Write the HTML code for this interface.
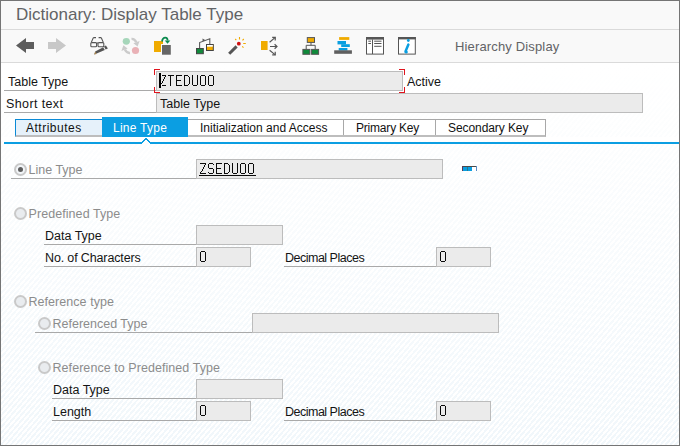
<!DOCTYPE html>
<html><head><meta charset="utf-8">
<style>
*{margin:0;padding:0;box-sizing:border-box}
html,body{width:680px;height:446px;overflow:hidden;background:#fff}
body{position:relative;font-family:"Liberation Sans",sans-serif;font-size:12.5px;color:#000}
.a{position:absolute;white-space:pre;line-height:normal}
#frame{position:absolute;left:0;top:0;width:680px;height:446px;border:1px solid #757575;z-index:50}
#head{position:absolute;left:0;top:0;width:680px;height:63px;background:#f9f9f9}
.hl{position:absolute;left:1px;width:678px;height:1px;background:#dadada}
#content{position:absolute;left:0;top:63px;width:680px;height:383px;
 background:linear-gradient(to bottom,rgba(255,255,255,1) 0%,rgba(255,255,255,0) 100%),repeating-linear-gradient(130.2deg,#ffffff 0px,#ffffff 1.88px,#f1f7fb 1.88px,#f1f7fb 3.76px)}
.title{left:16px;top:5px;font-size:17px;color:#626366}
.lbl{font-size:12.5px;color:#141414}
.ul{position:absolute;height:1px;background:#a9a9a9}
.fld{position:absolute;background:#ebebeb;border:1px solid #bcbcbc;height:20px}
.mono{font-family:"Liberation Mono",monospace;font-size:14px;color:#111;transform:scaleX(0.93);transform-origin:0 0}
.dis{color:#8c8c8c}
.radio{position:absolute;width:13px;height:13px;border-radius:50%;border:2px solid #c9c9c9;background:#e9ecef}
.radio.on{background:#f3f6f9}
.radio.on::after{content:"";position:absolute;left:2px;top:2px;width:5px;height:5px;border-radius:50%;background:#5e5e5e}
.tab{position:absolute;top:119px;height:18px;border-top:1px solid #a8a8a8;border-bottom:2px solid #bdbdbd;font-size:12px;color:#111}
.tab span{position:absolute;top:1px;font-size:12px}
.br{position:absolute;background:#e0141e}
</style></head><body>
<div id="head"></div>
<div class="hl" style="top:29px"></div>
<div class="hl" style="top:62px"></div>
<div id="content"></div>

<div class="a title">Dictionary: Display Table Type</div>

<!-- toolbar icons -->
<svg class="a" style="left:0;top:30px" width="680" height="32" viewBox="0 30 680 32">
 <!-- back -->
 <path d="M16 45.5 L26 38 L26 42 L34 42 L34 49 L26 49 L26 53 Z" fill="#5d5d5d"/>
 <!-- forward -->
 <path d="M66 45.5 L56 38 L56 42 L48 42 L48 49 L56 49 L56 53 Z" fill="#c8c8c8"/>
 <!-- glasses + pencil -->
 <g fill="none" stroke="#555" stroke-width="1.1">
  <rect x="90.8" y="42.6" width="5.8" height="4.2" rx="1"/>
  <rect x="98" y="42.6" width="5.8" height="4.2" rx="1"/>
  <path d="M96.6 43 L98 43 M91.3 42.4 L93.2 38 Q93.5 37.6 94 37.6 L96 37.6 M103.3 42.4 L101.4 38 Q101.1 37.6 100.6 37.6 L98.6 37.6"/>
 </g>
 <path d="M94.3 54.6 L95.2 51.6 L103.2 47.3 L104.8 50 Z" fill="#555"/>
 <path d="M104 46.6 L105.9 45.5 L107.9 48.4 L105.6 49.6 Z" fill="#555"/>
 <path d="M94.3 54.6 L95.2 51.6 L96.6 53.9 Z" fill="#b08a50"/>
 <!-- circles sync -->
 <ellipse cx="126.3" cy="41.3" rx="3.6" ry="3.4" fill="#a6d6ba"/>
 <ellipse cx="135.5" cy="50.4" rx="3.6" ry="3.5" fill="#e9b1b6"/>
 <path d="M131.5 38.9 Q134.5 38.6 136.3 42.3" fill="none" stroke="#cbcbcb" stroke-width="2.4"/>
 <path d="M133.4 43.3 L139.6 41 L137.6 46.6 Z" fill="#cbcbcb"/>
 <path d="M130 53 Q126.7 53.3 124.9 49.6" fill="none" stroke="#cbcbcb" stroke-width="2.4"/>
 <path d="M127.6 48.6 L121.4 50.9 L123.4 45.3 Z" fill="#cbcbcb"/>
 <!-- copy/transfer -->
 <rect x="154" y="41" width="9" height="11" fill="#f0ab00"/>
 <rect x="161" y="44" width="10.6" height="11.5" fill="#f9f9f9"/>
 <rect x="162" y="45" width="8.8" height="9.7" fill="#666"/>
 <path d="M162 41.5 Q162.6 37.7 165.3 37.7 Q167.6 37.7 167.6 40.6" fill="none" stroke="#0b8a4e" stroke-width="1.8"/>
 <path d="M164.8 40.4 L170.3 40.4 L167.5 43.8 Z" fill="#0b8a4e"/>
 <!-- hierarchy move -->
 <path d="M199.6 48 L199.6 42.6 L209.8 38.8 L209.8 44.2" fill="none" stroke="#5a5a5a" stroke-width="1.1"/>
 <path d="M202.5 38.5 L205.5 40.3 L202.6 41.6 Z" fill="#5a5a5a"/>
 <rect x="196.5" y="48.5" width="6.8" height="5.2" fill="#128a3c" stroke="#444" stroke-width="1"/>
 <rect x="206.5" y="44.5" width="6.8" height="6" fill="#f0ab00" stroke="#444" stroke-width="1"/>
 <rect x="207" y="45" width="5.8" height="1.7" fill="#fff"/>
 <!-- magic wand -->
 <path d="M229.2 53.8 L236.6 46.4" stroke="#555" stroke-width="3"/>
 <circle cx="238.8" cy="43.7" r="1.9" fill="#d01010"/>
 <g stroke="#f0ab00" stroke-width="1.1">
  <path d="M239.5 37 L239.5 39.6 M235.2 39 L236.3 40.1 M242.5 40.3 L243.8 39 M243.2 43.5 L245.8 43.5 M242.2 46.4 L243.5 47.7"/>
 </g>
 <!-- distribute -->
 <rect x="261" y="41" width="6.6" height="9" fill="#f0ab00"/>
 <g stroke="#555" stroke-width="1.2" fill="none">
  <path d="M269.6 42.2 L275 37.6 M270 46.5 L277 46.5 M269.6 50.3 L275 54.6"/>
  <path d="M272.2 37.4 L275.3 37.4 L275.2 40.4 M274.6 44.2 L277 46.5 L274.6 48.8 M272.2 54.8 L275.3 54.8 L275.2 51.8"/>
 </g>
 <!-- hierarchy -->
 <rect x="307.3" y="37.6" width="7.2" height="4.8" fill="#f0ab00" stroke="#555" stroke-width="1"/>
 <path d="M311 42.6 L311 45.3 M306.2 49 L306.2 45.3 L315.2 45.3 L315.2 49" fill="none" stroke="#555" stroke-width="1"/>
 <rect x="302.9" y="49.4" width="7" height="4.9" fill="#0f8a3a" stroke="#555" stroke-width="1"/>
 <rect x="311.6" y="49.4" width="7" height="4.9" fill="#0f8a3a" stroke="#555" stroke-width="1"/>
 <!-- stack -->
 <rect x="339.1" y="37.1" width="10.2" height="2.8" fill="#f0ab00"/>
 <rect x="337.5" y="41" width="8.5" height="3.4" fill="#0a9ee0"/>
 <rect x="341.2" y="44.2" width="8.6" height="2.8" fill="#0a9ee0"/>
 <rect x="338.7" y="48" width="8.7" height="2.6" fill="#0a9ee0"/>
 <rect x="334.2" y="50.3" width="17.7" height="3.5" fill="#5f5f5f"/>
 <!-- document -->
 <rect x="366.5" y="37.5" width="17" height="16.6" fill="#fff" stroke="#555" stroke-width="1"/>
 <rect x="366" y="37" width="18" height="2.6" fill="#555"/>
 <path d="M372.5 39.5 L372.5 54" stroke="#555" stroke-width="1"/>
 <path d="M368.3 41.2 L371 41.2 M368.3 43.5 L371 43.5 M374.2 41.2 L381.5 41.2 M374.2 43.5 L381.5 43.5 M374.2 46.3 L381.5 46.3" stroke="#555" stroke-width="1"/>
 <!-- info -->
 <rect x="398.5" y="37.5" width="16.8" height="16.6" fill="#fff" stroke="#555" stroke-width="1"/>
 <rect x="398" y="37" width="17.8" height="2.4" fill="#555"/>
 <path d="M408.4 44.6 L405.6 51.2 Q405.1 52.6 406.6 52" fill="none" stroke="#0a9ee0" stroke-width="2.5" stroke-linecap="round"/>
 <circle cx="408.3" cy="40.5" r="1.4" fill="#0a9ee0"/>
</svg>
<div class="a" style="left:455px;top:38.5px;font-size:13px;letter-spacing:0.15px;color:#626366">Hierarchy Display</div>

<!-- header fields -->
<div class="a lbl" style="left:8px;top:75px">Table Type</div>
<div class="ul" style="left:4px;top:90px;width:153px"></div>
<div class="fld" style="left:156px;top:71px;width:247px"></div>
<div class="br" style="left:154px;top:69px;width:6px;height:1px"></div>
<div class="br" style="left:154px;top:69px;width:1px;height:6px"></div>
<div class="br" style="left:154px;top:92px;width:6px;height:1px"></div>
<div class="br" style="left:154px;top:87px;width:1px;height:6px"></div>
<div class="br" style="left:399px;top:69px;width:6px;height:1px"></div>
<div class="br" style="left:404px;top:69px;width:1px;height:6px"></div>
<div class="br" style="left:399px;top:92px;width:6px;height:1px"></div>
<div class="br" style="left:404px;top:87px;width:1px;height:6px"></div>
<div class="a lbl" style="left:407px;top:75px">Active</div>

<div class="a lbl" style="left:6px;top:97px;letter-spacing:0.38px">Short text</div>
<div class="ul" style="left:4px;top:112px;width:152px"></div>
<div class="fld" style="left:156px;top:93px;width:487px"></div>
<div class="a lbl" style="left:160px;top:97px">Table Type</div>

<!-- tabs -->
<div class="a" style="left:1px;top:137px;width:678px;height:4px;background:#fff"></div>
<div class="a" style="left:188px;top:119px;width:358px;height:18px;background:#fff"></div>
<div class="tab" style="left:15px;width:88px;background:#e6f1fa;border-left:1px solid #0a8ad6;border-top-color:#0a8ad6">
 <span style="left:10px;letter-spacing:0.5px">Attributes</span></div>
<div class="a" style="left:102px;top:117px;width:86px;height:20px;background:#0b9ee2"></div>
<div class="a" style="left:113px;top:121px;color:#fff;font-size:12px;letter-spacing:0.25px">Line Type</div>
<div class="tab" style="left:188px;width:156px;border-right:1px solid #a8a8a8">
 <span style="left:12px">Initialization and Access</span></div>
<div class="tab" style="left:343px;width:93px;border-right:1px solid #a8a8a8">
 <span style="left:13px;letter-spacing:-0.2px">Primary Key</span></div>
<div class="tab" style="left:435px;width:111px;border-right:1px solid #a8a8a8">
 <span style="left:13px;letter-spacing:-0.08px">Secondary Key</span></div>
<svg class="a" style="left:0;top:0" width="680" height="446" viewBox="0 0 680 446" shape-rendering="crispEdges"><path d="M145 138h2v1h-2zM144 139h4v1h-4zM143 140h2v1h-2zM147 140h2v1h-2zM142 141h2v1h-2zM148 141h2v1h-2zM4 142h139v1h-139zM149 142h530v1h-530zM4 143h138v1h-138zM150 143h529v1h-529z" fill="#0b9ee2"/></svg>

<!-- Line type -->
<div class="radio on" style="left:14px;top:163px"></div>
<div class="a lbl dis" style="left:28.5px;top:163px">Line Type</div>
<div class="ul" style="left:11px;top:178px;width:185px"></div>
<div class="fld" style="left:196px;top:159px;width:247px"></div>
<svg class="a" style="left:462px;top:166px" width="15" height="5" viewBox="0 0 15 5" shape-rendering="crispEdges">
 <rect x="0" y="0" width="15" height="5" fill="#fff"/>
 <rect x="1" y="1" width="9" height="4" fill="#0a9ee0"/>
 <rect x="5" y="1" width="1" height="4" fill="#2a7a8a"/>
 <rect x="0" y="0" width="15" height="1" fill="#4a4a4a"/>
 <rect x="0" y="0" width="1" height="5" fill="#5a3a5a"/>
 <rect x="14" y="0" width="1" height="5" fill="#5a8fc8"/>
</svg>

<!-- Predefined -->
<div class="radio" style="left:14px;top:207px"></div>
<div class="a lbl dis" style="left:28.5px;top:207px;letter-spacing:0.07px">Predefined Type</div>
<div class="a lbl" style="left:45px;top:229px">Data Type</div>
<div class="ul" style="left:44px;top:244px;width:152px"></div>
<div class="fld" style="left:196px;top:225px;width:87px"></div>
<div class="a lbl" style="left:45px;top:251px;letter-spacing:-0.14px">No. of Characters</div>
<div class="ul" style="left:44px;top:266px;width:152px"></div>
<div class="fld" style="left:196px;top:247px;width:55px"></div>
<div class="a lbl" style="left:285px;top:251px;letter-spacing:-0.5px">Decimal Places</div>
<div class="ul" style="left:284px;top:266px;width:152px"></div>
<div class="fld" style="left:436px;top:247px;width:55px"></div>

<!-- Reference -->
<div class="radio" style="left:14px;top:295px"></div>
<div class="a lbl dis" style="left:28.5px;top:295px;letter-spacing:0.05px">Reference type</div>
<div class="radio" style="left:38px;top:317px"></div>
<div class="a lbl dis" style="left:52.5px;top:317px">Referenced Type</div>
<div class="ul" style="left:35px;top:332px;width:217px"></div>
<div class="fld" style="left:252px;top:313px;width:247px"></div>

<div class="radio" style="left:38px;top:361px"></div>
<div class="a lbl dis" style="left:52.5px;top:361px;letter-spacing:0.06px">Reference to Predefined Type</div>
<div class="a lbl" style="left:53px;top:383px">Data Type</div>
<div class="ul" style="left:52px;top:398px;width:144px"></div>
<div class="fld" style="left:196px;top:379px;width:87px"></div>
<div class="a lbl" style="left:53px;top:405px">Length</div>
<div class="ul" style="left:52px;top:420px;width:144px"></div>
<div class="fld" style="left:196px;top:401px;width:55px"></div>
<div class="a lbl" style="left:285px;top:405px;letter-spacing:-0.5px">Decimal Places</div>
<div class="ul" style="left:284px;top:420px;width:152px"></div>
<div class="fld" style="left:436px;top:401px;width:55px"></div>

<svg class="a" style="left:0;top:0;z-index:10" width="680" height="446" viewBox="0 0 680 446" shape-rendering="crispEdges">
 <path d="M160 75h6v1h-6zM165 76h1v1h-1zM164 77h1v1h-1zM164 78h1v1h-1zM163 79h1v1h-1zM163 80h1v1h-1zM162 81h1v1h-1zM162 82h1v1h-1zM161 83h1v1h-1zM160 84h1v1h-1zM160 85h6v1h-6zM168 75h6v1h-6zM170 76h1v1h-1zM170 77h1v1h-1zM170 78h1v1h-1zM170 79h1v1h-1zM170 80h1v1h-1zM170 81h1v1h-1zM170 82h1v1h-1zM170 83h1v1h-1zM170 84h1v1h-1zM170 85h1v1h-1zM176 75h6v1h-6zM176 76h1v1h-1zM176 77h1v1h-1zM176 78h1v1h-1zM176 79h1v1h-1zM176 80h5v1h-5zM176 81h1v1h-1zM176 82h1v1h-1zM176 83h1v1h-1zM176 84h1v1h-1zM176 85h6v1h-6zM184 75h4v1h-4zM184 76h1v1h-1zM188 76h1v1h-1zM184 77h1v1h-1zM189 77h1v1h-1zM184 78h1v1h-1zM189 78h1v1h-1zM184 79h1v1h-1zM189 79h1v1h-1zM184 80h1v1h-1zM189 80h1v1h-1zM184 81h1v1h-1zM189 81h1v1h-1zM184 82h1v1h-1zM189 82h1v1h-1zM184 83h1v1h-1zM189 83h1v1h-1zM184 84h1v1h-1zM188 84h1v1h-1zM184 85h4v1h-4zM192 75h1v1h-1zM197 75h1v1h-1zM192 76h1v1h-1zM197 76h1v1h-1zM192 77h1v1h-1zM197 77h1v1h-1zM192 78h1v1h-1zM197 78h1v1h-1zM192 79h1v1h-1zM197 79h1v1h-1zM192 80h1v1h-1zM197 80h1v1h-1zM192 81h1v1h-1zM197 81h1v1h-1zM192 82h1v1h-1zM197 82h1v1h-1zM192 83h1v1h-1zM197 83h1v1h-1zM192 84h1v1h-1zM197 84h1v1h-1zM193 85h4v1h-4zM201 75h4v1h-4zM200 76h1v1h-1zM205 76h1v1h-1zM200 77h1v1h-1zM205 77h1v1h-1zM200 78h1v1h-1zM205 78h1v1h-1zM200 79h1v1h-1zM205 79h1v1h-1zM200 80h1v1h-1zM205 80h1v1h-1zM200 81h1v1h-1zM205 81h1v1h-1zM200 82h1v1h-1zM205 82h1v1h-1zM200 83h1v1h-1zM205 83h1v1h-1zM200 84h1v1h-1zM205 84h1v1h-1zM201 85h4v1h-4zM209 75h4v1h-4zM208 76h1v1h-1zM213 76h1v1h-1zM208 77h1v1h-1zM213 77h1v1h-1zM208 78h1v1h-1zM213 78h1v1h-1zM208 79h1v1h-1zM213 79h1v1h-1zM208 80h1v1h-1zM213 80h1v1h-1zM208 81h1v1h-1zM213 81h1v1h-1zM208 82h1v1h-1zM213 82h1v1h-1zM208 83h1v1h-1zM213 83h1v1h-1zM208 84h1v1h-1zM213 84h1v1h-1zM209 85h4v1h-4zM200 163h6v1h-6zM205 164h1v1h-1zM204 165h1v1h-1zM204 166h1v1h-1zM203 167h1v1h-1zM203 168h1v1h-1zM202 169h1v1h-1zM202 170h1v1h-1zM201 171h1v1h-1zM200 172h1v1h-1zM200 173h6v1h-6zM209 163h4v1h-4zM208 164h1v1h-1zM213 164h1v1h-1zM208 165h1v1h-1zM208 166h1v1h-1zM208 167h1v1h-1zM209 168h4v1h-4zM213 169h1v1h-1zM213 170h1v1h-1zM213 171h1v1h-1zM208 172h1v1h-1zM213 172h1v1h-1zM209 173h4v1h-4zM216 163h6v1h-6zM216 164h1v1h-1zM216 165h1v1h-1zM216 166h1v1h-1zM216 167h1v1h-1zM216 168h5v1h-5zM216 169h1v1h-1zM216 170h1v1h-1zM216 171h1v1h-1zM216 172h1v1h-1zM216 173h6v1h-6zM224 163h4v1h-4zM224 164h1v1h-1zM228 164h1v1h-1zM224 165h1v1h-1zM229 165h1v1h-1zM224 166h1v1h-1zM229 166h1v1h-1zM224 167h1v1h-1zM229 167h1v1h-1zM224 168h1v1h-1zM229 168h1v1h-1zM224 169h1v1h-1zM229 169h1v1h-1zM224 170h1v1h-1zM229 170h1v1h-1zM224 171h1v1h-1zM229 171h1v1h-1zM224 172h1v1h-1zM228 172h1v1h-1zM224 173h4v1h-4zM232 163h1v1h-1zM237 163h1v1h-1zM232 164h1v1h-1zM237 164h1v1h-1zM232 165h1v1h-1zM237 165h1v1h-1zM232 166h1v1h-1zM237 166h1v1h-1zM232 167h1v1h-1zM237 167h1v1h-1zM232 168h1v1h-1zM237 168h1v1h-1zM232 169h1v1h-1zM237 169h1v1h-1zM232 170h1v1h-1zM237 170h1v1h-1zM232 171h1v1h-1zM237 171h1v1h-1zM232 172h1v1h-1zM237 172h1v1h-1zM233 173h4v1h-4zM241 163h4v1h-4zM240 164h1v1h-1zM245 164h1v1h-1zM240 165h1v1h-1zM245 165h1v1h-1zM240 166h1v1h-1zM245 166h1v1h-1zM240 167h1v1h-1zM245 167h1v1h-1zM240 168h1v1h-1zM245 168h1v1h-1zM240 169h1v1h-1zM245 169h1v1h-1zM240 170h1v1h-1zM245 170h1v1h-1zM240 171h1v1h-1zM245 171h1v1h-1zM240 172h1v1h-1zM245 172h1v1h-1zM241 173h4v1h-4zM249 163h4v1h-4zM248 164h1v1h-1zM253 164h1v1h-1zM248 165h1v1h-1zM253 165h1v1h-1zM248 166h1v1h-1zM253 166h1v1h-1zM248 167h1v1h-1zM253 167h1v1h-1zM248 168h1v1h-1zM253 168h1v1h-1zM248 169h1v1h-1zM253 169h1v1h-1zM248 170h1v1h-1zM253 170h1v1h-1zM248 171h1v1h-1zM253 171h1v1h-1zM248 172h1v1h-1zM253 172h1v1h-1zM249 173h4v1h-4zM201 251h4v1h-4zM200 252h1v1h-1zM205 252h1v1h-1zM200 253h1v1h-1zM205 253h1v1h-1zM200 254h1v1h-1zM205 254h1v1h-1zM200 255h1v1h-1zM205 255h1v1h-1zM200 256h1v1h-1zM205 256h1v1h-1zM200 257h1v1h-1zM205 257h1v1h-1zM200 258h1v1h-1zM205 258h1v1h-1zM200 259h1v1h-1zM205 259h1v1h-1zM200 260h1v1h-1zM205 260h1v1h-1zM201 261h4v1h-4zM441 251h4v1h-4zM440 252h1v1h-1zM445 252h1v1h-1zM440 253h1v1h-1zM445 253h1v1h-1zM440 254h1v1h-1zM445 254h1v1h-1zM440 255h1v1h-1zM445 255h1v1h-1zM440 256h1v1h-1zM445 256h1v1h-1zM440 257h1v1h-1zM445 257h1v1h-1zM440 258h1v1h-1zM445 258h1v1h-1zM440 259h1v1h-1zM445 259h1v1h-1zM440 260h1v1h-1zM445 260h1v1h-1zM441 261h4v1h-4zM201 405h4v1h-4zM200 406h1v1h-1zM205 406h1v1h-1zM200 407h1v1h-1zM205 407h1v1h-1zM200 408h1v1h-1zM205 408h1v1h-1zM200 409h1v1h-1zM205 409h1v1h-1zM200 410h1v1h-1zM205 410h1v1h-1zM200 411h1v1h-1zM205 411h1v1h-1zM200 412h1v1h-1zM205 412h1v1h-1zM200 413h1v1h-1zM205 413h1v1h-1zM200 414h1v1h-1zM205 414h1v1h-1zM201 415h4v1h-4zM441 405h4v1h-4zM440 406h1v1h-1zM445 406h1v1h-1zM440 407h1v1h-1zM445 407h1v1h-1zM440 408h1v1h-1zM445 408h1v1h-1zM440 409h1v1h-1zM445 409h1v1h-1zM440 410h1v1h-1zM445 410h1v1h-1zM440 411h1v1h-1zM445 411h1v1h-1zM440 412h1v1h-1zM445 412h1v1h-1zM440 413h1v1h-1zM445 413h1v1h-1zM440 414h1v1h-1zM445 414h1v1h-1zM441 415h4v1h-4z" fill="#0a0a0a"/>
 <path d="M199 175h57v1h-57z" fill="#0a0a0a"/>
 <path d="M159 73h2v15h-2z" fill="#000"/>
 <path d="M161 75h1v1h-1zM161 85h1v1h-1z" fill="#fff"/>
</svg>
<div id="frame"></div>
</body></html>
